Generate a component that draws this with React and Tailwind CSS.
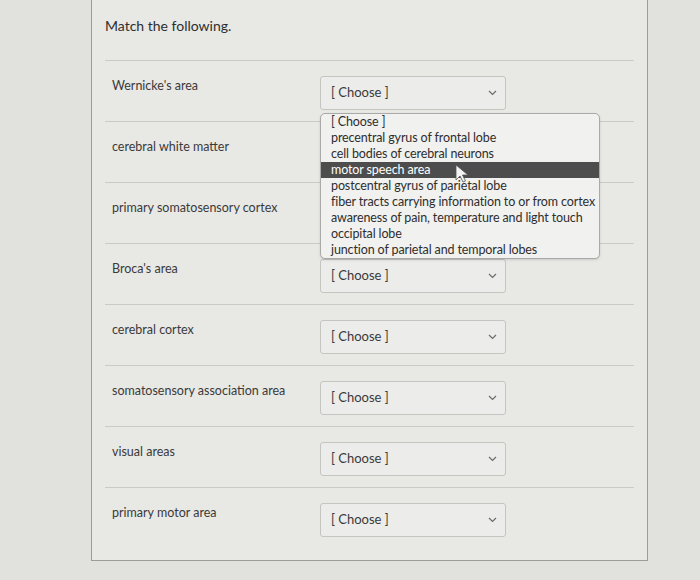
const rows = [
    'Wernicke\'s area',
    'cerebral white matter',
    'primary somatosensory cortex',
    'Broca\'s area',
    'cerebral cortex',
    'somatosensory association area',
    'visual areas',
    'primary motor area',
];

const options = [
    '[ Choose ]',
    'precentral gyrus of frontal lobe',
    'cell bodies of cerebral neurons',
    'motor speech area',
    'postcentral gyrus of parietal lobe',
    'fiber tracts carrying information to or from cortex',
    'awareness of pain, temperature and light touch',
    'occipital lobe',
    'junction of parietal and temporal lobes',
];

function Chevron() {
    return (
        <svg width="9" height="6" viewBox="0 0 9 6" className="text-[#6b6b6b]">
            <path d="M1 1l3.5 3.5L8 1" fill="none" stroke="currentColor" strokeWidth="1.2" />
        </svg>
    );
}

// rows 2 and 3 sit under the open list, so their boxes are hidden
function ChooseBox({ hidden }) {
    return (
        <div
            className={
                (hidden ? 'invisible ' : '') +
                'mt-[15px] flex h-[34px] w-[186px] items-center justify-between rounded-[3px] border border-[#c4c4c1] bg-[#ececea] pl-[10px] pr-[8px] text-[13px] text-[#3a3a3a]'
            }
        >
            <span>[ Choose ]</span>
            <Chevron />
        </div>
    );
}

export default function App() {
    return (
        <div className="h-[580px] w-[700px] overflow-hidden bg-[#e1e1de] font-['Lato','Open_Sans',sans-serif]">
            <div className="relative ml-[91px] h-[561px] w-[557px] border-x border-b border-[#9c9c9a] bg-[#e8e8e5] px-[13px]">
                <div className="pt-[16px] pb-[24px] text-[14px] leading-[20px] text-[#2e2e2e]">Match the following.</div>

                {rows.map((label, i) => (
                    <div key={label} className="flex h-[61px] border-t border-[#cacac7]">
                        <div className="w-[215px] pl-[7px] pt-[16px] text-[12.5px] leading-[18px] text-[#3a3a3a]">{label}</div>
                        <ChooseBox hidden={i === 1 || i === 2} />
                    </div>
                ))}

                <div className="absolute left-[228px] top-[113px] w-[280px] overflow-hidden rounded-[5px] border border-[#a9a9a7] bg-[#f1f1ef] shadow-sm">
                    {options.map((o, i) => (
                        <div
                            key={o}
                            className={
                                i === 3
                                    ? 'h-[16px] whitespace-nowrap bg-[#4d4d4d] pl-[10px] text-[12.5px] leading-[16px] tracking-[-0.12px] text-white'
                                    : 'h-[16px] whitespace-nowrap pl-[10px] text-[12.5px] leading-[16px] tracking-[-0.12px] text-[#2e2e2e]'
                            }
                        >
                            {o}
                        </div>
                    ))}
                    <svg width="14" height="20" viewBox="0 0 14 20" className="absolute left-[134px] top-[50px]">
                        <path d="M1 1v15l4-4 3 6 2.5-1-3-6h5.5z" fill="#f4f4f4" stroke="#555" strokeWidth="0.8" />
                    </svg>
                </div>
            </div>
        </div>
    );
}
